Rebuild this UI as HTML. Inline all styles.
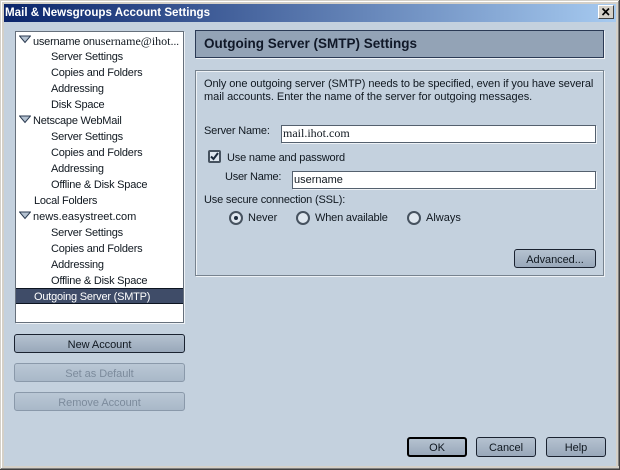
<!DOCTYPE html>
<html><head><meta charset="utf-8"><style>
html,body{margin:0;padding:0}
body{width:620px;height:470px;position:relative;overflow:hidden;background:#c4d1de;font:11px/14px "Liberation Sans",sans-serif;color:#101820}
.a{position:absolute;white-space:nowrap}
#title{left:4px;top:4px;width:612px;height:18px;background:linear-gradient(90deg,#0a246a,#a6caf0)}
.t{font-weight:bold;color:#fff;left:5px;top:6px;font-size:11.6px}
#tree{left:15px;top:31px;width:167px;height:290px;background:#fff;border:1px solid #66707c;box-shadow:1px 1px 0 #eef2f6;letter-spacing:-.22px}
.r{left:0;height:16px;line-height:18px}
.btn{box-sizing:border-box;border:1px solid #1a2230;border-radius:3px;background:linear-gradient(#b5c2d0,#99a8ba);text-align:center;line-height:21px;letter-spacing:-.05px}
.dis{border-color:#8a99aa;color:#7c8b9c;background:linear-gradient(#bac7d5,#a9b8c8)}
.inp{box-sizing:border-box;background:#fff;border:1px solid #54606e;box-shadow:1px 1px 0 #eef2f6;height:18px;padding-left:1px;line-height:15px}
.rad{box-sizing:border-box;width:14px;height:14px;border-radius:50%;border:2px solid #46525f;background:#dfe7ef}
.s{letter-spacing:-.18px}
</style></head><body>
<div class="a" style="left:0;top:0;width:620px;height:1px;background:#d4d0c8"></div>
<div class="a" style="left:0;top:1px;width:620px;height:1px;background:#fff"></div>
<div class="a" style="left:0;top:0;width:1px;height:470px;background:#d4d0c8"></div>
<div class="a" style="left:1px;top:1px;width:1px;height:468px;background:#fff"></div>
<div class="a" style="left:2px;top:2px;width:2px;height:466px;background:#d4d0c8"></div>
<div class="a" style="left:2px;top:2px;width:616px;height:2px;background:#d4d0c8"></div>
<div class="a" style="left:616px;top:2px;width:2px;height:466px;background:#d4d0c8"></div>
<div class="a" style="left:618px;top:1px;width:1px;height:468px;background:#808080"></div>
<div class="a" style="left:619px;top:0;width:1px;height:470px;background:#404040"></div>
<div class="a" style="left:2px;top:466px;width:617px;height:2px;background:#d4d0c8"></div>
<div class="a" style="left:1px;top:468px;width:618px;height:1px;background:#808080"></div>
<div class="a" style="left:0;top:469px;width:620px;height:1px;background:#404040"></div>
<div class="a" id="title"></div>
<div class="a t">Mail &amp; Newsgroups Account Settings</div>
<div class="a" style="left:598px;top:5px;width:16px;height:14px;box-sizing:border-box;background:#d4d0c8;border:1px solid;border-color:#fff #404040 #404040 #fff">
<svg width="14" height="12" style="display:block"><path d="M3.5 2.5L10 9M10 2.5L3.5 9" stroke="#000" stroke-width="1.6" fill="none"/></svg></div>

<div class="a" id="tree">
<svg class="a" style="left:3px;top:3px" width="12" height="9"><path d="M0.5 1H11.5L6 7.5Z" fill="#b5c3d2" stroke="#2a3a50"/></svg>
<div class="a r" style="left:17px;top:0">username on<span style="font-family:'Liberation Serif',serif;font-size:12px;letter-spacing:0">username@ihot</span>...</div>
<div class="a r" style="left:35px;top:16px">Server Settings</div>
<div class="a r" style="left:35px;top:32px">Copies and Folders</div>
<div class="a r" style="left:35px;top:48px">Addressing</div>
<div class="a r" style="left:35px;top:64px">Disk Space</div>
<svg class="a" style="left:3px;top:83px" width="12" height="9"><path d="M0.5 1H11.5L6 7.5Z" fill="#b5c3d2" stroke="#2a3a50"/></svg>
<div class="a r" style="left:17px;top:80px">Netscape WebMail</div>
<div class="a r" style="left:35px;top:96px">Server Settings</div>
<div class="a r" style="left:35px;top:112px">Copies and Folders</div>
<div class="a r" style="left:35px;top:128px">Addressing</div>
<div class="a r" style="left:35px;top:144px">Offline &amp; Disk Space</div>
<div class="a r" style="left:18px;top:160px">Local Folders</div>
<svg class="a" style="left:3px;top:179px" width="12" height="9"><path d="M0.5 1H11.5L6 7.5Z" fill="#b5c3d2" stroke="#2a3a50"/></svg>
<div class="a r" style="left:17px;top:176px;letter-spacing:0">news.easystreet.com</div>
<div class="a r" style="left:35px;top:192px">Server Settings</div>
<div class="a r" style="left:35px;top:208px">Copies and Folders</div>
<div class="a r" style="left:35px;top:224px">Addressing</div>
<div class="a r" style="left:35px;top:240px">Offline &amp; Disk Space</div>
<div class="a" style="left:0;top:256px;width:167px;height:16px;box-sizing:border-box;background:#3f4c68;border-top:1px solid #0c1420;border-bottom:1px solid #0c1420"></div>
<div class="a r" style="left:18px;top:256px;color:#fff">Outgoing Server (SMTP)</div>
</div>

<div class="a btn" style="left:14px;top:334px;width:171px;height:19px">New Account</div>
<div class="a btn dis" style="left:14px;top:363px;width:171px;height:19px">Set as Default</div>
<div class="a btn dis" style="left:14px;top:392px;width:171px;height:19px">Remove Account</div>

<div class="a" style="left:195px;top:30px;width:409px;height:28px;box-sizing:border-box;background:#93a3b6;border:1px solid #2b3a55;box-shadow:1px 1px 0 #eef2f6"></div>
<div class="a" style="left:204px;top:37px;font-size:13.5px;font-weight:bold;color:#101828">Outgoing Server (SMTP) Settings</div>

<div class="a" style="left:195px;top:70px;width:409px;height:206px;box-sizing:border-box;border:1px solid #77838f;box-shadow:1px 1px 0 #eef2f6,inset 1px 1px 0 #eef2f6"></div>
<div class="a" style="left:204px;top:77px;letter-spacing:-.08px">Only one outgoing server (SMTP) needs to be specified, even if you have several</div>
<div class="a" style="left:204px;top:90px;letter-spacing:-.03px">mail accounts. Enter the name of the server for outgoing messages.</div>
<div class="a s" style="left:204px;top:124px">Server Name:</div>
<div class="a inp" style="left:281px;top:125px;width:315px;font-family:'Liberation Serif',serif;font-size:12px">mail.ihot.com</div>

<div class="a" style="left:208px;top:150px;width:13px;height:13px;box-sizing:border-box;border:2px solid #46525f;border-radius:2px;background:#dfe7ef">
<svg width="9" height="9" style="display:block"><path d="M1 4.5L3.5 7L8 1" stroke="#1c2a3c" stroke-width="2" fill="none"/></svg></div>
<div class="a s" style="left:227px;top:151px">Use name and password</div>
<div class="a s" style="left:225px;top:170px;letter-spacing:-.25px">User Name:</div>
<div class="a inp" style="left:292px;top:171px;width:304px;line-height:17px">username</div>
<div class="a s" style="left:204px;top:193px">Use secure connection (SSL):</div>

<div class="a rad" style="left:229px;top:211px"><div style="width:4px;height:4px;margin:3px;border-radius:50%;background:#1c2a3c"></div></div>
<div class="a" style="left:248px;top:211px">Never</div>
<div class="a rad" style="left:296px;top:211px"></div>
<div class="a s" style="left:315px;top:211px">When available</div>
<div class="a rad" style="left:407px;top:211px"></div>
<div class="a" style="left:426px;top:211px">Always</div>

<div class="a btn" style="left:514px;top:249px;width:82px;height:19px">Advanced...</div>
<div class="a btn" style="left:407px;top:437px;width:60px;height:20px;border-width:2px;border-color:#000;line-height:19px">OK</div>
<div class="a btn" style="left:476px;top:437px;width:60px;height:20px;line-height:21px">Cancel</div>
<div class="a btn" style="left:546px;top:437px;width:60px;height:20px;line-height:21px">Help</div>
</body></html>
